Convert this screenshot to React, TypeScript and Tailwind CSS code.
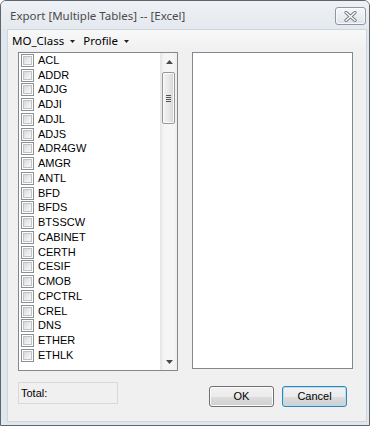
const tables = [
  "ACL", "ADDR", "ADJG", "ADJI", "ADJL", "ADJS", "ADR4GW", "AMGR", "ANTL", "BFD", "BFDS",
  "BTSSCW", "CABINET", "CERTH", "CESIF", "CMOB", "CPCTRL", "CREL", "DNS", "ETHER", "ETHLK",
];

function Tri({ down }: { down?: boolean }) {
  return (
    <svg width="7" height="4" viewBox="0 0 7 4" className="block">
      <path d={down ? "M0 0h7L3.5 4z" : "M0 4h7L3.5 0z"} fill="#4a4a4a" />
    </svg>
  );
}

function MenuItem({ label }: { label: string }) {
  return (
    <div className="flex items-center gap-[6px] px-[4px] text-[11.5px] text-black">
      <span>{label}</span>
      <svg width="5" height="3" viewBox="0 0 5 3" className="block mt-[1px]">
        <path d="M0 0h5L2.5 3z" fill="#222" />
      </svg>
    </div>
  );
}

function CheckBox() {
  return (
    <span className="flex h-[13px] w-[13px] shrink-0 border border-[#8e8f8f] bg-white p-[1px]">
      <span className="flex-1 border border-[#bfc3c8] bg-[linear-gradient(135deg,#d5d7da_0%,#eeeeee_60%,#f7f7f7_100%)]" />
    </span>
  );
}

function Button({ label, primary }: { label: string; primary?: boolean }) {
  return (
    <button
      className={
        "h-[21px] w-[65px] rounded-[3px] border text-[11px] text-black bg-[linear-gradient(to_bottom,#f2f2f2_0%,#ebebeb_50%,#dddddd_51%,#cfcfcf_100%)] " +
        (primary ? "border-[#3c7fb1] shadow-[inset_0_0_0_1px_#a8e3f8]" : "border-[#707070] shadow-[inset_0_0_0_1px_#fbfbfb]")
      }
    >
      {label}
    </button>
  );
}

export default function App() {
  return (
    <div className="h-[429px] w-[373px] overflow-hidden bg-white font-['Liberation_Sans',sans-serif]">
      <div className="flex h-[426px] w-[370px] flex-col rounded-t-[6px] border border-[#5f656b] bg-[#e1e7ee] pb-[3px] pl-[6px] pr-[2px]">
        {/* title bar */}
        <div className="-ml-[6px] -mr-[2px] flex h-[28px] shrink-0 items-start rounded-t-[5px] bg-[linear-gradient(to_bottom,#eef1f5,#e4e9ef)] pl-[9px] pr-[3px]">
          <span className="mt-[6px] font-['Noto_Sans',sans-serif] text-[11.5px] text-[#4a4a4a]">
            Export [Multiple Tables] -- [Excel]
          </span>
          <div className="ml-auto mt-[6px] flex h-[18px] w-[31px] items-center justify-center rounded-[3px] border border-[#8d97a3] bg-[linear-gradient(to_bottom,#f7f8fa,#dfe3e8)] shadow-[inset_0_0_0_1px_#ffffffaa]">
            <svg width="13" height="11" viewBox="0 0 13 11">
              <path d="M2 1.5l9 8M11 1.5l-9 8" stroke="#6f7a86" strokeWidth="3.2" strokeLinecap="round" />
              <path d="M2 1.5l9 8M11 1.5l-9 8" stroke="#ffffff" strokeWidth="1.4" strokeLinecap="round" />
            </svg>
          </div>
        </div>

        {/* client */}
        <div className="flex flex-1 flex-col border border-[#cfd5dc] bg-[#f0f0f0]">
          <div className="flex h-[21px] items-center bg-[linear-gradient(to_bottom,#f8f8f8,#f0f0f0)] font-['Noto_Sans',sans-serif]">
            <MenuItem label="MO_Class" />
            <MenuItem label="Profile" />
          </div>

          <div className="mt-[1px] flex items-start gap-[14px] pl-[10px]">
            {/* table list */}
            <div className="flex h-[319px] w-[160px] border border-[#828790] bg-white">
              <div className="flex-1 overflow-hidden pl-[2px]">
                {tables.map((t) => (
                  <div key={t} className="flex h-[14.75px] items-center gap-[4px] text-[11px] leading-none text-black">
                    <CheckBox />
                    <span>{t}</span>
                  </div>
                ))}
              </div>
              {/* scrollbar */}
              <div className="flex w-[17px] flex-col border-l border-[#e6e6e6] bg-[linear-gradient(to_right,#e9e9e9,#f5f5f5_20%,#f5f5f5_80%,#ececec)]">
                <div className="flex h-[17px] items-center justify-center">
                  <Tri />
                </div>
                <div className="ml-[1px] mt-[2px] flex h-[52px] w-[13px] items-center justify-center rounded-[2px] border border-[#979797] bg-[linear-gradient(to_right,#f4f4f4,#e8e8e8_50%,#d4d4d4)] shadow-[inset_0_0_0_1px_#fafafa]">
                  <div className="flex flex-col gap-[1px]">
                    <span className="block h-[1px] w-[5px] bg-[#555]" />
                    <span className="block h-[1px] w-[5px] bg-[#555]" />
                    <span className="block h-[1px] w-[5px] bg-[#555]" />
                    <span className="block h-[1px] w-[5px] bg-[#555]" />
                  </div>
                </div>
                <div className="mt-auto flex h-[17px] items-center justify-center">
                  <Tri down />
                </div>
              </div>
            </div>

            {/* preview */}
            <div className="h-[317px] w-[161px] border border-[#828790] bg-white" />
          </div>

          <div className="mt-[11px] flex items-start pl-[10px]">
            <div className="flex h-[22px] w-[100px] items-center border border-[#d9d9d9] pl-[2px] text-[11px] text-black">
              Total:
            </div>
            <div className="ml-[91px] mt-[4px] flex gap-[8px]">
              <Button label="OK" />
              <Button label="Cancel" primary />
            </div>
          </div>
        </div>
      </div>
    </div>
  );
}
